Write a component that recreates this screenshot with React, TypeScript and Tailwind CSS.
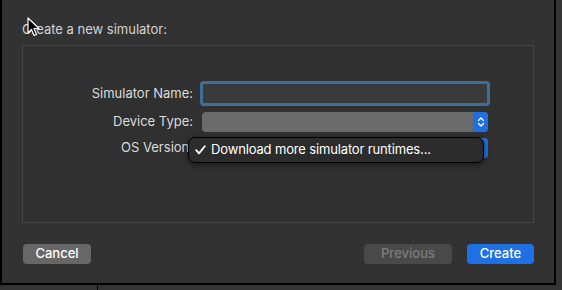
import React from "react";

const Stepper = () => (
  <div className="w-[15px] h-full bg-[#1f6fe0] rounded-r-[4px] flex items-center justify-center">
    <svg width="8" height="12" viewBox="0 0 8 12" fill="none" stroke="white" strokeWidth="1.4" strokeLinecap="round" strokeLinejoin="round">
      <path d="M1.5 4.5 L4 2 L6.5 4.5" />
      <path d="M1.5 7.5 L4 10 L6.5 7.5" />
    </svg>
  </div>
);

const Cursor = () => (
  <svg className="absolute left-[25px] top-[17px]" width="14" height="20" viewBox="0 0 14 20">
    <path d="M1 1 L1 16 L4.5 12.5 L7 18.5 L9.5 17.5 L7 11.5 L12 11.5 Z" fill="black" stroke="white" strokeWidth="1.2" strokeLinejoin="round" />
  </svg>
);

const App = () => {
  return (
    <div className="w-[562px] h-[290px] bg-[#343434] overflow-hidden font-['Inter','Liberation_Sans',sans-serif]">
      {/* sheet window */}
      <div className="relative w-[556px] h-[285px] bg-[#323232] border-l-2 border-r-2 border-b-2 border-black flex flex-col px-[20px]">
        <Cursor />
        <p className="mt-[21px] text-[13px] leading-[16px] text-[#d4d4d4]">
          Create a new simulator:
        </p>
        {/* form box */}
        <div className="mt-[8px] w-[512px] h-[178px] border border-[#454545] bg-[#303030] pt-[35px]">
          <div className="grid grid-cols-[170px_290px] gap-x-[7px] items-center">
            <p className="text-[13px] text-right text-[#dcdcdc]">Simulator Name:</p>
            <div className="h-[25px] rounded-[4px] border-[3px] border-[#3b6f9c] bg-[#3a3a3a]"></div>

            <p className="mt-[6px] text-[13px] text-right text-[#dcdcdc]">Device Type:</p>
            <div className="mt-[6px] mx-[2px] h-[20px] rounded-[4px] bg-[#6b6b6b] flex justify-end">
              <Stepper />
            </div>

            <p className="mt-[6px] text-[13px] text-right text-[#dcdcdc]">OS Version:</p>
            <div className="relative mt-[6px] mx-[2px] h-[20px] rounded-[4px] bg-[#6b6b6b] flex justify-end">
              <Stepper />
              {/* open menu */}
              <div className="absolute left-[-14px] top-[-1px] w-[296px] h-[26px] rounded-[7px] bg-[#2c2c2c] border border-black shadow-[0_2px_6px_rgba(0,0,0,0.5)] flex items-center gap-[5px] px-[6px]">
                <svg width="11" height="10" viewBox="0 0 11 10" fill="none" stroke="white" strokeWidth="1.8" strokeLinecap="round" strokeLinejoin="round">
                  <path d="M1.2 5.2 L4 8.4 L9.8 1.2" />
                </svg>
                <span className="text-[13px] tracking-[-0.15px] text-white">Download more simulator runtimes...</span>
              </div>
            </div>
          </div>
        </div>
        {/* buttons */}
        <div className="mt-[21px] flex items-center">
          <button className="ml-[1px] w-[68px] h-[20px] rounded-[4px] bg-[#676767] text-[13px] font-medium text-white">
            Cancel
          </button>
          <button className="ml-auto w-[88px] h-[20px] rounded-[4px] bg-[#494949] text-[13px] font-medium text-[#7c7c7c]">
            Previous
          </button>
          <button className="ml-[15px] w-[67px] h-[20px] rounded-[4px] bg-[#1f6fe5] text-[13px] font-medium text-white">
            Create
          </button>
        </div>
      </div>
      <div className="ml-[97px] w-[1px] h-[5px] bg-black"></div>
    </div>
  );
};

export default App;
